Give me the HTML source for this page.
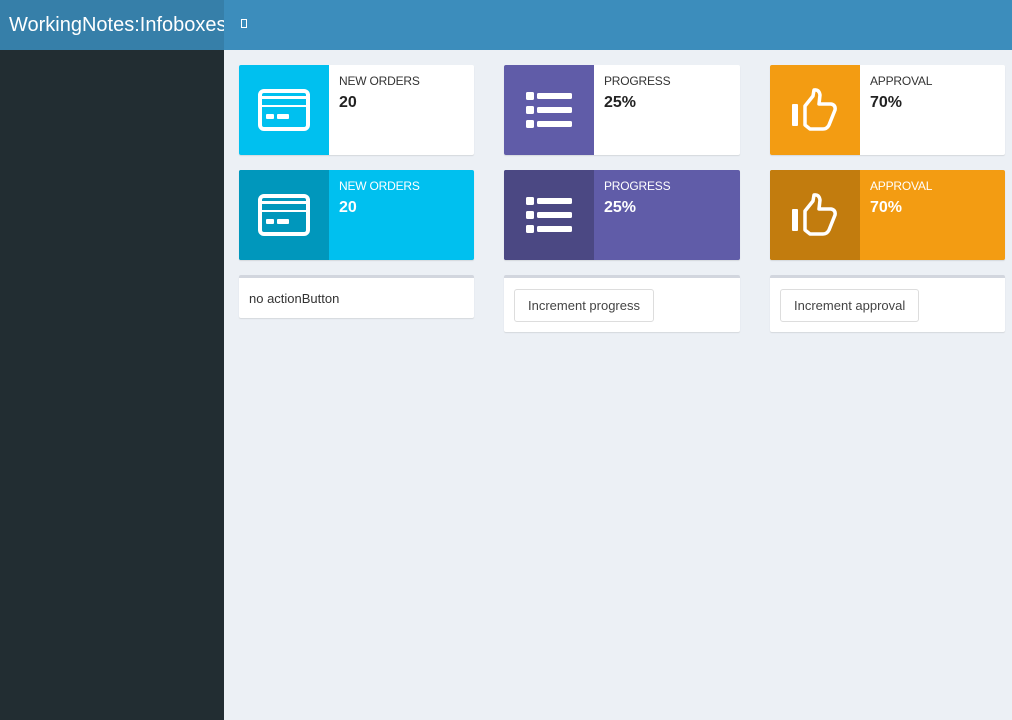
<!DOCTYPE html>
<html><head><meta charset="utf-8"><style>
*{box-sizing:border-box;margin:0;padding:0}
body{width:1012px;height:720px;overflow:hidden;background:#ecf0f5;font-family:"Liberation Sans",sans-serif;position:relative}
.logo{position:absolute;left:0;top:0;width:224px;height:50px;background:#367fa9;color:#fff;font-size:20px;line-height:50px;padding-left:9px;white-space:nowrap;overflow:hidden}
.nav{position:absolute;left:224px;top:0;right:0;height:50px;background:#3c8dbc}
.tog{position:absolute;left:17px;top:19px;width:6px;height:9px;border:1px solid #fff}
.side{position:absolute;left:0;top:50px;width:224px;bottom:0;background:#222d32}
.ib{position:absolute;width:235px;height:90px;background:#fff;box-shadow:0 1px 1px rgba(0,0,0,.1);border-radius:2px;overflow:hidden}
.ic{position:absolute;left:0;top:0;width:90px;height:90px;display:flex;align-items:center;justify-content:center}
.tx{position:absolute;left:100px;top:9px;font-size:12px;color:#333;text-transform:uppercase;letter-spacing:-0.2px}
.nm{position:absolute;left:100px;top:29px;font-size:16px;font-weight:bold;color:#222}
.wh .tx,.wh .nm{color:#fff}
.bx{position:absolute;width:235px;background:#fff;border-top:3px solid #d2d6de;box-shadow:0 1px 1px rgba(0,0,0,.1);border-radius:2px;font-size:13px;color:#333}
.btn{position:absolute;left:10px;top:11px;height:33px;padding:0 13px;border:1px solid #ddd;border-radius:3px;line-height:31px;background:#fff;color:#444;font-size:13px;white-space:nowrap}
</style></head><body>
<div class="logo">WorkingNotes:Infoboxes</div>
<div class="nav"><div class="tog"></div></div>
<div class="side"></div>

<div class="ib" style="left:239px;top:65px"><div class="ic" style="background:#00c0ef"><svg width="52" height="42" viewBox="0 0 52 42"><rect x="2" y="2" width="48" height="38" rx="4" fill="none" stroke="#fff" stroke-width="4"/><rect x="3" y="7" width="46" height="3" fill="#fff"/><rect x="3" y="16" width="46" height="2" fill="#fff"/><rect x="8" y="25" width="8" height="5" rx="1" fill="#fff"/><rect x="19" y="25" width="12" height="5" rx="1" fill="#fff"/></svg></div><div class="tx">New Orders</div><div class="nm">20</div></div>
<div class="ib" style="left:504px;top:65px;width:236px"><div class="ic" style="background:#605ca8"><svg width="48" height="38" viewBox="0 0 48 38"><g fill="#fff"><rect x="1" y="1" width="8" height="8" rx="1.5"/><rect x="1" y="15" width="8" height="8" rx="1.5"/><rect x="1" y="29" width="8" height="8" rx="1.5"/><rect x="12" y="2" width="35" height="6" rx="1.5"/><rect x="12" y="16" width="35" height="6" rx="1.5"/><rect x="12" y="30" width="35" height="6" rx="1.5"/></g></svg></div><div class="tx">Progress</div><div class="nm">25%</div></div>
<div class="ib" style="left:770px;top:65px"><div class="ic" style="background:#f39c12"><svg width="48" height="44" viewBox="0 0 48 44"><rect x="1" y="16" width="6" height="22" rx="1" fill="#fff"/><path d="M14 18 L22 8 L23 2 Q28 1 29 7 L28 16 L40 16 Q45 17 44 22 L38 37 Q36 41 32 41 L19 41 L14 37 Z" fill="none" stroke="#fff" stroke-width="3.5" stroke-linejoin="round"/></svg></div><div class="tx">Approval</div><div class="nm">70%</div></div>

<div class="ib wh" style="left:239px;top:170px;background:#00c0ef"><div class="ic" style="background:#0097bc"><svg width="52" height="42" viewBox="0 0 52 42"><rect x="2" y="2" width="48" height="38" rx="4" fill="none" stroke="#fff" stroke-width="4"/><rect x="3" y="7" width="46" height="3" fill="#fff"/><rect x="3" y="16" width="46" height="2" fill="#fff"/><rect x="8" y="25" width="8" height="5" rx="1" fill="#fff"/><rect x="19" y="25" width="12" height="5" rx="1" fill="#fff"/></svg></div><div class="tx">New Orders</div><div class="nm">20</div></div>
<div class="ib wh" style="left:504px;top:170px;width:236px;background:#605ca8"><div class="ic" style="background:#4b4883"><svg width="48" height="38" viewBox="0 0 48 38"><g fill="#fff"><rect x="1" y="1" width="8" height="8" rx="1.5"/><rect x="1" y="15" width="8" height="8" rx="1.5"/><rect x="1" y="29" width="8" height="8" rx="1.5"/><rect x="12" y="2" width="35" height="6" rx="1.5"/><rect x="12" y="16" width="35" height="6" rx="1.5"/><rect x="12" y="30" width="35" height="6" rx="1.5"/></g></svg></div><div class="tx">Progress</div><div class="nm">25%</div></div>
<div class="ib wh" style="left:770px;top:170px;background:#f39c12"><div class="ic" style="background:#c27c0e"><svg width="48" height="44" viewBox="0 0 48 44"><rect x="1" y="16" width="6" height="22" rx="1" fill="#fff"/><path d="M14 18 L22 8 L23 2 Q28 1 29 7 L28 16 L40 16 Q45 17 44 22 L38 37 Q36 41 32 41 L19 41 L14 37 Z" fill="none" stroke="#fff" stroke-width="3.5" stroke-linejoin="round"/></svg></div><div class="tx">Approval</div><div class="nm">70%</div></div>

<div class="bx" style="left:239px;top:275px;height:43px"><div style="position:absolute;left:10px;top:13px">no actionButton</div></div>
<div class="bx" style="left:504px;top:275px;width:236px;height:57px"><div class="btn">Increment progress</div></div>
<div class="bx" style="left:770px;top:275px;height:57px"><div class="btn">Increment approval</div></div>
</body></html>
